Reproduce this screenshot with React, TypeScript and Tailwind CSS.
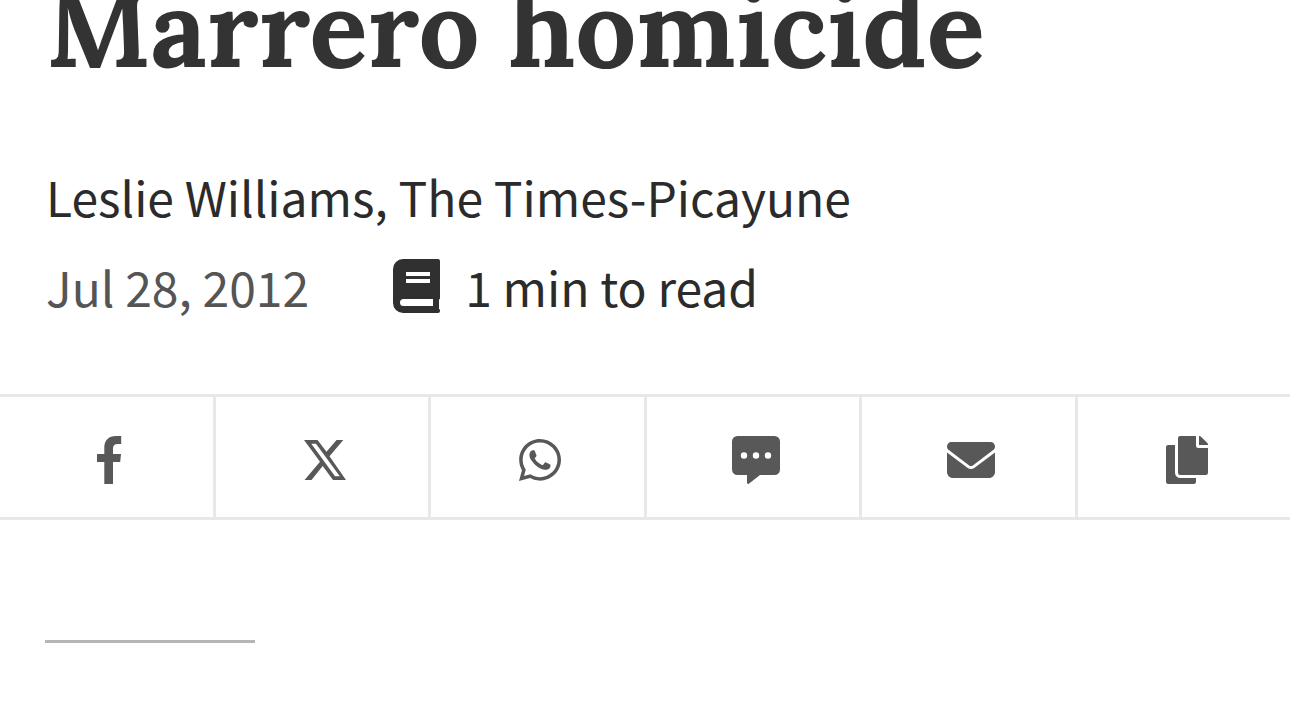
import type { ReactNode } from "react";
import { FaEnvelope, FaWhatsapp } from "react-icons/fa6";

type Share = { label: string; href: string; icon: ReactNode };

const BookIcon = () => (
  <svg viewBox="0 0 48 54" className="h-[54px] w-12 text-[#303030]" fill="currentColor" aria-hidden="true">
    <path
      fillRule="evenodd"
      d="M10 0h35a2 2 0 0 1 2 2v37a2 2 0 0 1-1 1.700v9.100a2 2 0 0 1 1 1.700V52a2 2 0 0 1-2 2H10A10 10 0 0 1 0 44V10A10 10 0 0 1 10 0ZM13 13v4h24v-4Zm0 7v4h24v-4ZM10.500 40a3.500 3.500 0 0 0 0 7H40v-7Z"
    />
  </svg>
);

const FacebookIcon = () => (
  <svg viewBox="0 0 24 48" className="h-12 w-6 overflow-visible" fill="currentColor" aria-hidden="true">
    <path d="M24.200 0H19C11.500 0 7.300 4.500 7.300 11.500V18H0v8h7.300v22H16V26h7.200l.8-8h-8v-5.500c0-3 1.500-4.500 4.500-4.500h3.700Z" />
  </svg>
);

const XIcon = () => (
  <svg viewBox="0 0 42 40" className="h-10 w-[42px]" fill="currentColor" aria-hidden="true">
    <path
      fillRule="evenodd"
      d="M0 0h13.500l9 11.800L32.600 0h6.700L25.500 16.300 42 40H29l-10.300-14L7.500 40H.500L16 21.700ZM7.300 3.700l23.700 32.600h4.800L12 3.700Z"
    />
  </svg>
);

const CommentIcon = () => (
  <svg viewBox="0 0 48 48" className="size-12" fill="currentColor" aria-hidden="true">
    <path
      fillRule="evenodd"
      d="M5.500 0h37A5.500 5.500 0 0 1 48 5.500v28a5.500 5.500 0 0 1-5.500 5.500H28l-11.200 8.700a1.100 1.100 0 0 1-1.800-.900V39H5.500A5.500 5.500 0 0 1 0 33.500v-28A5.500 5.500 0 0 1 5.500 0ZM12 16.300a3.200 3.200 0 1 0 0 6.400 3.200 3.200 0 0 0 0-6.400Zm12 0a3.200 3.200 0 1 0 0 6.400 3.200 3.200 0 0 0 0-6.400Zm12 0a3.200 3.200 0 1 0 0 6.400 3.200 3.200 0 0 0 0-6.400Z"
    />
  </svg>
);

const CopyIcon = () => (
  <svg viewBox="0 0 48 48" className="size-12" fill="currentColor" aria-hidden="true">
    <path d="M33 42v3.750A2.250 2.250 0 0 1 30.750 48H5.250A2.250 2.250 0 0 1 3 45.750V11.250A2.250 2.250 0 0 1 5.250 9H12v27.750A5.250 5.250 0 0 0 17.250 42H33Z" />
    <path d="M33 9.750V0H17.250A2.250 2.250 0 0 0 15 2.250v34.500A2.250 2.250 0 0 0 17.250 39h25.500A2.250 2.250 0 0 0 45 36.750V12H35.250A2.250 2.250 0 0 1 33 9.750Z" />
    <path d="M44.340 6.970 38.030.660A2.250 2.250 0 0 0 36.440 0H36v9h9v-.430a2.250 2.250 0 0 0-.660-1.600Z" />
  </svg>
);

const shares: Share[] = [
  { label: "Facebook", href: "#facebook", icon: <FacebookIcon /> },
  { label: "X", href: "#x", icon: <XIcon /> },
  { label: "WhatsApp", href: "#whatsapp", icon: <FaWhatsapp className="size-12" /> },
  { label: "SMS", href: "#sms", icon: <CommentIcon /> },
  { label: "Email", href: "#email", icon: <FaEnvelope className="size-12" /> },
  { label: "Copy article link", href: "#copy", icon: <CopyIcon /> },
];

export default function App() {
  return (
    <main className="min-h-screen overflow-hidden bg-white font-['Noto_Sans_CJK_SC','Noto_Sans',sans-serif] text-[#2b2b2b]">
      <header className="px-[46px]">
        <h1 className="-mt-8 font-['Lora','Liberation_Serif',serif] text-[108px] leading-[120px] font-bold text-[#333]">
          Marrero homicide
        </h1>
        <p className="mt-[63px] text-[48px] leading-[90px]">Leslie Williams, The Times-Picayune</p>
        <div className="flex items-center text-[48px] leading-[90px]">
          <time dateTime="2012-07-28" className="text-[#555]">Jul 28, 2012</time>
          <span className="ml-[84px] flex items-center gap-6">
            <BookIcon />
            1 min to read
          </span>
        </div>
      </header>
      <nav aria-label="Share" className="mt-[63px] flex divide-x-3 divide-[#e8e8e8] border-y-3 border-[#e8e8e8]">
        {shares.map((s) => (
          <a
            key={s.label}
            href={s.href}
            aria-label={s.label}
            className="flex h-[120px] flex-1 items-center justify-center pt-1.5 pl-1.5 text-[#585858]"
          >
            {s.icon}
          </a>
        ))}
      </nav>
      <hr className="mt-[120px] ml-[45px] w-[210px] border-t-3 border-[#b5b5b5]" />
    </main>
  );
}
